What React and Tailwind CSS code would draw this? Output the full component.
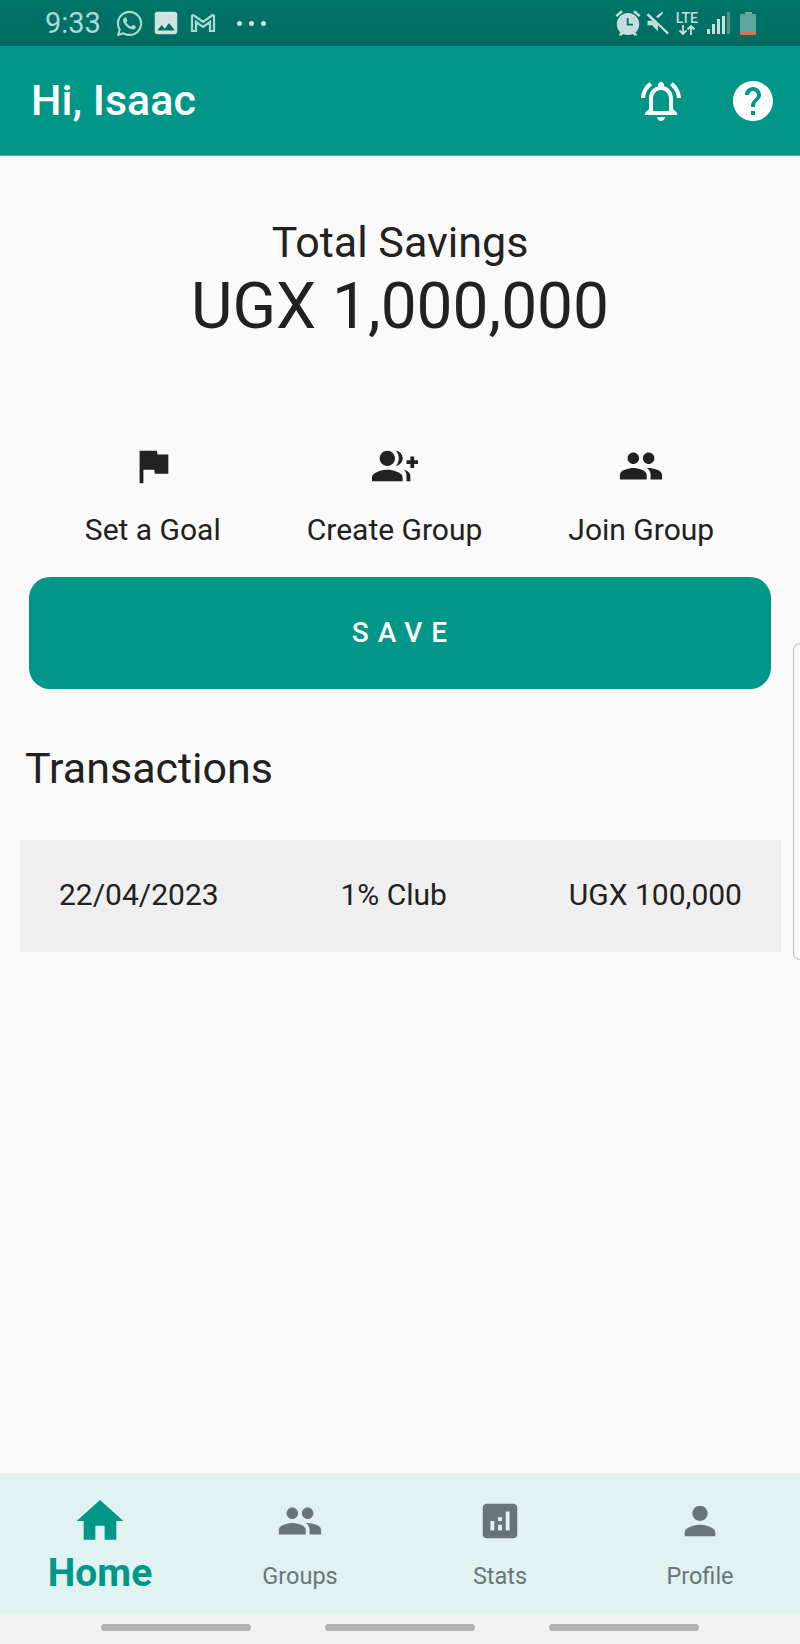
import { FaWhatsapp } from "react-icons/fa";

const people =
  "M16 11c1.66 0 2.99-1.34 2.99-3S17.66 5 16 5c-1.66 0-3 1.34-3 3s1.34 3 3 3zm-8 0c1.66 0 2.99-1.34 2.99-3S9.66 5 8 5C6.34 5 5 6.34 5 8s1.34 3 3 3zm0 2c-2.33 0-7 1.17-7 3.5V19h14v-2.5c0-2.33-4.67-3.5-7-3.5zm8 0c-.29 0-.62.02-.97.05 1.16.84 1.97 1.97 1.97 3.45V19h6v-2.5c0-2.33-4.67-3.5-7-3.5z";

const icons = {
  bell: "M12 22c1.1 0 2-.9 2-2h-4c0 1.1.9 2 2 2zm6-6v-5c0-3.07-1.63-5.64-4.5-6.32V4c0-.83-.67-1.5-1.5-1.5s-1.5.67-1.5 1.5v.68C7.64 5.36 6 7.92 6 11v5l-2 2v1h16v-1l-2-2zm-2 1H8v-6c0-2.48 1.51-4.5 4-4.5s4 2.02 4 4.5v6zM7.58 4.08L6.15 2.65C3.75 4.48 2.17 7.3 2.03 10.5h2c.15-2.65 1.51-4.97 3.55-6.42zM19.97 10.5h2c-.15-3.2-1.73-6.02-4.12-7.85l-1.42 1.43c2.02 1.45 3.39 3.77 3.54 6.42z",
  help: "M12 2C6.48 2 2 6.48 2 12s4.48 10 10 10 10-4.48 10-10S17.52 2 12 2zm1 17h-2v-2h2v2zm2.07-7.75l-.9.92C13.45 12.9 13 13.5 13 15h-2v-.5c0-1.1.45-2.1 1.17-2.83l1.24-1.26c.37-.36.59-.86.59-1.41 0-1.1-.9-2-2-2s-2 .9-2 2H8c0-2.21 1.79-4 4-4s4 1.79 4 4c0 .88-.36 1.68-.93 2.25z",
  flag: "M14.4 6L14 4H5v17h2v-7h5.6l.4 2h7V6z",
  groupAdd:
    "M22 9V7h-2v2h-2v2h2v2h2v-2h2V9h-2zM8 12c2.21 0 4-1.79 4-4s-1.79-4-4-4-4 1.79-4 4 1.79 4 4 4zm0 2c-2.67 0-8 1.34-8 4v2h16v-2c0-2.66-5.33-4-8-4zM12.51 4.05C13.43 5.11 14 6.49 14 8s-.57 2.89-1.49 3.95C14.47 11.7 16 10.04 16 8s-1.53-3.7-3.49-3.95zM16.53 13.83c.89.83 1.47 1.87 1.47 3.17v3h2v-3c0-1.45-1.59-2.51-3.47-3.17z",
  people,
  home: "M10 20v-6h4v6h5v-8h3L12 3 2 12h3v8z",
  stats:
    "M19 3H5c-1.1 0-2 .9-2 2v14c0 1.1.9 2 2 2h14c1.1 0 2-.9 2-2V5c0-1.1-.9-2-2-2zM9 17H7v-5h2v5zm4 0h-2v-3h2v3zm0-5h-2v-2h2v2zm4 5h-2V7h2v10z",
  person:
    "M12 12c2.21 0 4-1.79 4-4s-1.79-4-4-4-4 1.79-4 4 1.79 4 4 4zm0 2c-2.67 0-8 1.34-8 4v2h16v-2c0-2.66-5.33-4-8-4z",
  image:
    "M21 19V5c0-1.1-.9-2-2-2H5c-1.1 0-2 .9-2 2v14c0 1.1.9 2 2 2h14c1.1 0 2-.9 2-2zM8.5 13.5l2.5 3.01L14.5 12l4.5 6H5l3.5-4.5z",
  alarm:
    "M22 5.72l-4.6-3.86-1.29 1.53 4.6 3.86L22 5.72zM7.88 3.39L6.6 1.86 2 5.71l1.29 1.53 4.59-3.85zM12 4c-4.97 0-9 4.03-9 9 0 2.6 1.1 4.9 2.9 6.6L4.5 22H7l1.2-1.2c1.1.5 2.4.8 3.8.8s2.7-.3 3.8-.8L17 22h2.5l-1.4-2.4c1.8-1.7 2.9-4 2.9-6.6 0-4.97-4.03-9-9-9zm4 10h-5V8h1.5v4.5H16V14z",
  mute: "M3.63 3.63L2.22 5.04 7.17 10H3v4h4l5 5v-5.17l7.96 7.95 1.41-1.41zM16 4l-4 4-1.6-1.6L16 2z",
};

function Icon({ name, className }) {
  return (
    <svg viewBox="0 0 24 24" className={className} fill="currentColor">
      <path d={icons[name]} />
    </svg>
  );
}

function StatusBar() {
  return (
    <div className="h-[46px] shrink-0 bg-linear-to-b from-[#00756a] to-[#006b60] flex items-center justify-between pl-[45px] pr-[44px] text-[#a9dbd4]">
      <div className="flex items-center">
        <span className="text-[29px] leading-none">9:33</span>
        <FaWhatsapp className="ml-[14px] w-[29px] h-[29px]" />
        <Icon name="image" className="ml-[7px] w-[30px] h-[30px] text-[#cfe3df]" />
        <svg viewBox="0 0 26 20" className="ml-[9px] w-[26px] h-[20px]" fill="none" stroke="currentColor" strokeWidth="2.2">
          <path d="M2 18V3.5c0-1.2 1-1.6 2-1L13 9l9-6.5c1-.6 2-.2 2 1V18h-4V9l-7 5-7-5v9z" />
        </svg>
        <div className="ml-[21px] flex gap-[7px]">
          <span className="w-[5px] h-[5px] rounded-full bg-[#cfe3df]" />
          <span className="w-[5px] h-[5px] rounded-full bg-[#cfe3df]" />
          <span className="w-[5px] h-[5px] rounded-full bg-[#cfe3df]" />
        </div>
      </div>
      <div className="flex items-center text-[#c6dedb]">
        <Icon name="alarm" className="w-[30px] h-[30px]" />
        <Icon name="mute" className="ml-[1px] w-[28px] h-[28px]" />
        <div className="ml-[4px] flex flex-col items-center">
          <span className="text-[14px] leading-[14px] font-medium">LTE</span>
          <svg viewBox="0 0 18 10" className="w-[18px] h-[10px]" fill="none" stroke="currentColor" strokeWidth="1.8">
            <path d="M5 0v9M1.5 5.5L5 9l3.5-3.5M13 10V1M9.5 4.5L13 1l3.5 3.5" />
          </svg>
        </div>
        <div className="ml-[9px] flex items-end gap-[2px] h-[22px]">
          <span className="w-[3px] h-[5px] bg-[#c6dedb]" />
          <span className="w-[3px] h-[10px] bg-[#c6dedb]" />
          <span className="w-[3px] h-[15px] bg-[#c6dedb]" />
          <span className="w-[3px] h-[18px] bg-[#c6dedb]" />
          <span className="w-[3px] h-[22px] bg-[#4d9489]" />
        </div>
        <div className="ml-[10px] flex flex-col items-center">
          <span className="w-[7px] h-[2px] bg-[#6fa9a0]" />
          <span className="w-[16px] h-[21px] rounded-[1px] bg-[#5ea69c] flex flex-col justify-end overflow-hidden">
            <span className="h-[3px] bg-[#d8764a]" />
          </span>
        </div>
      </div>
    </div>
  );
}

function Action({ icon, label, iconClass }) {
  return (
    <div className="flex flex-col items-center">
      <Icon name={icon} className={iconClass} />
      <span className="mt-[24px] text-[30px] leading-[34px]">{label}</span>
    </div>
  );
}

function NavItem({ icon, label, active }) {
  return (
    <div className={`flex-1 flex flex-col items-center ${active ? "text-[#009688]" : "text-[#687678]"}`}>
      <div className="h-[56px] flex items-center justify-center">
        <Icon name={icon} className={active ? "w-[56px] h-[56px]" : "w-[46px] h-[46px]"} />
      </div>
      {active ? (
        <span className="mt-[3px] text-[39px] leading-[42px] font-bold">{label}</span>
      ) : (
        <span className="mt-[13px] text-[23.5px] leading-[28px]">{label}</span>
      )}
    </div>
  );
}

export default function App() {
  return (
    <div className="relative h-[1644px] w-[800px] overflow-hidden bg-[#fafafa] text-[#212121] flex flex-col font-['Roboto',sans-serif]">
      <StatusBar />

      <header className="h-[110px] shrink-0 bg-[#009688] border-b border-[#4db6ac] flex items-center justify-between pl-[31px] pr-[23px] text-white">
        <h1 className="text-[43px] leading-none font-medium">Hi, Isaac</h1>
        <div className="flex items-center gap-[44px]">
          <Icon name="bell" className="w-[48px] h-[48px]" />
          <Icon name="help" className="w-[48px] h-[48px]" />
        </div>
      </header>

      <main className="flex-1 flex flex-col">
        <div className="pt-[61px] flex flex-col items-center">
          <p className="text-[43px] leading-[50px]">Total Savings</p>
          <p className="mt-[2px] text-[64px] leading-[76px]">UGX 1,000,000</p>
        </div>

        <div className="mt-[98px] pr-[1px] flex justify-center items-end gap-[86px]">
          <Action icon="flag" label="Set a Goal" iconClass="w-[46px] h-[46px]" />
          <Action icon="groupAdd" label="Create Group" iconClass="w-[48px] h-[46px]" />
          <Action icon="people" label="Join Group" iconClass="w-[46px] h-[46px]" />
        </div>

        <button className="mt-[30px] mx-[29px] h-[112px] rounded-[21px] bg-[#009688] text-white text-[28px] font-medium tracking-[9px] pl-[8px]">
          SAVE
        </button>

        <h2 className="mt-[54px] ml-[25px] text-[43px] leading-[50px]">Transactions</h2>

        <div className="mt-[47px] ml-[20px] w-[761px] h-[112px] bg-[#efefef] flex items-center justify-between px-[39px] pb-[3px] text-[30px]">
          <span>22/04/2023</span>
          <span>1% Club</span>
          <span>UGX 100,000</span>
        </div>
      </main>

      {/* edge panel handle */}
      <div className="absolute right-0 top-[643px] w-[7px] h-[317px] rounded-l-[8px] border border-r-0 border-[#bdbdbd]" />

      <nav className="h-[141px] shrink-0 bg-[#e0f2f1] flex items-start pt-[20px]">
        <NavItem icon="home" label="Home" active />
        <NavItem icon="people" label="Groups" />
        <NavItem icon="stats" label="Stats" />
        <NavItem icon="person" label="Profile" />
      </nav>

      <div className="h-[30px] shrink-0 bg-[#f1f1f1] flex items-center justify-center gap-[74px] pb-[4px]">
        <span className="w-[150px] h-[7px] rounded-full bg-[#b3b3b3]" />
        <span className="w-[150px] h-[7px] rounded-full bg-[#b3b3b3]" />
        <span className="w-[150px] h-[7px] rounded-full bg-[#b3b3b3]" />
      </div>
    </div>
  );
}
